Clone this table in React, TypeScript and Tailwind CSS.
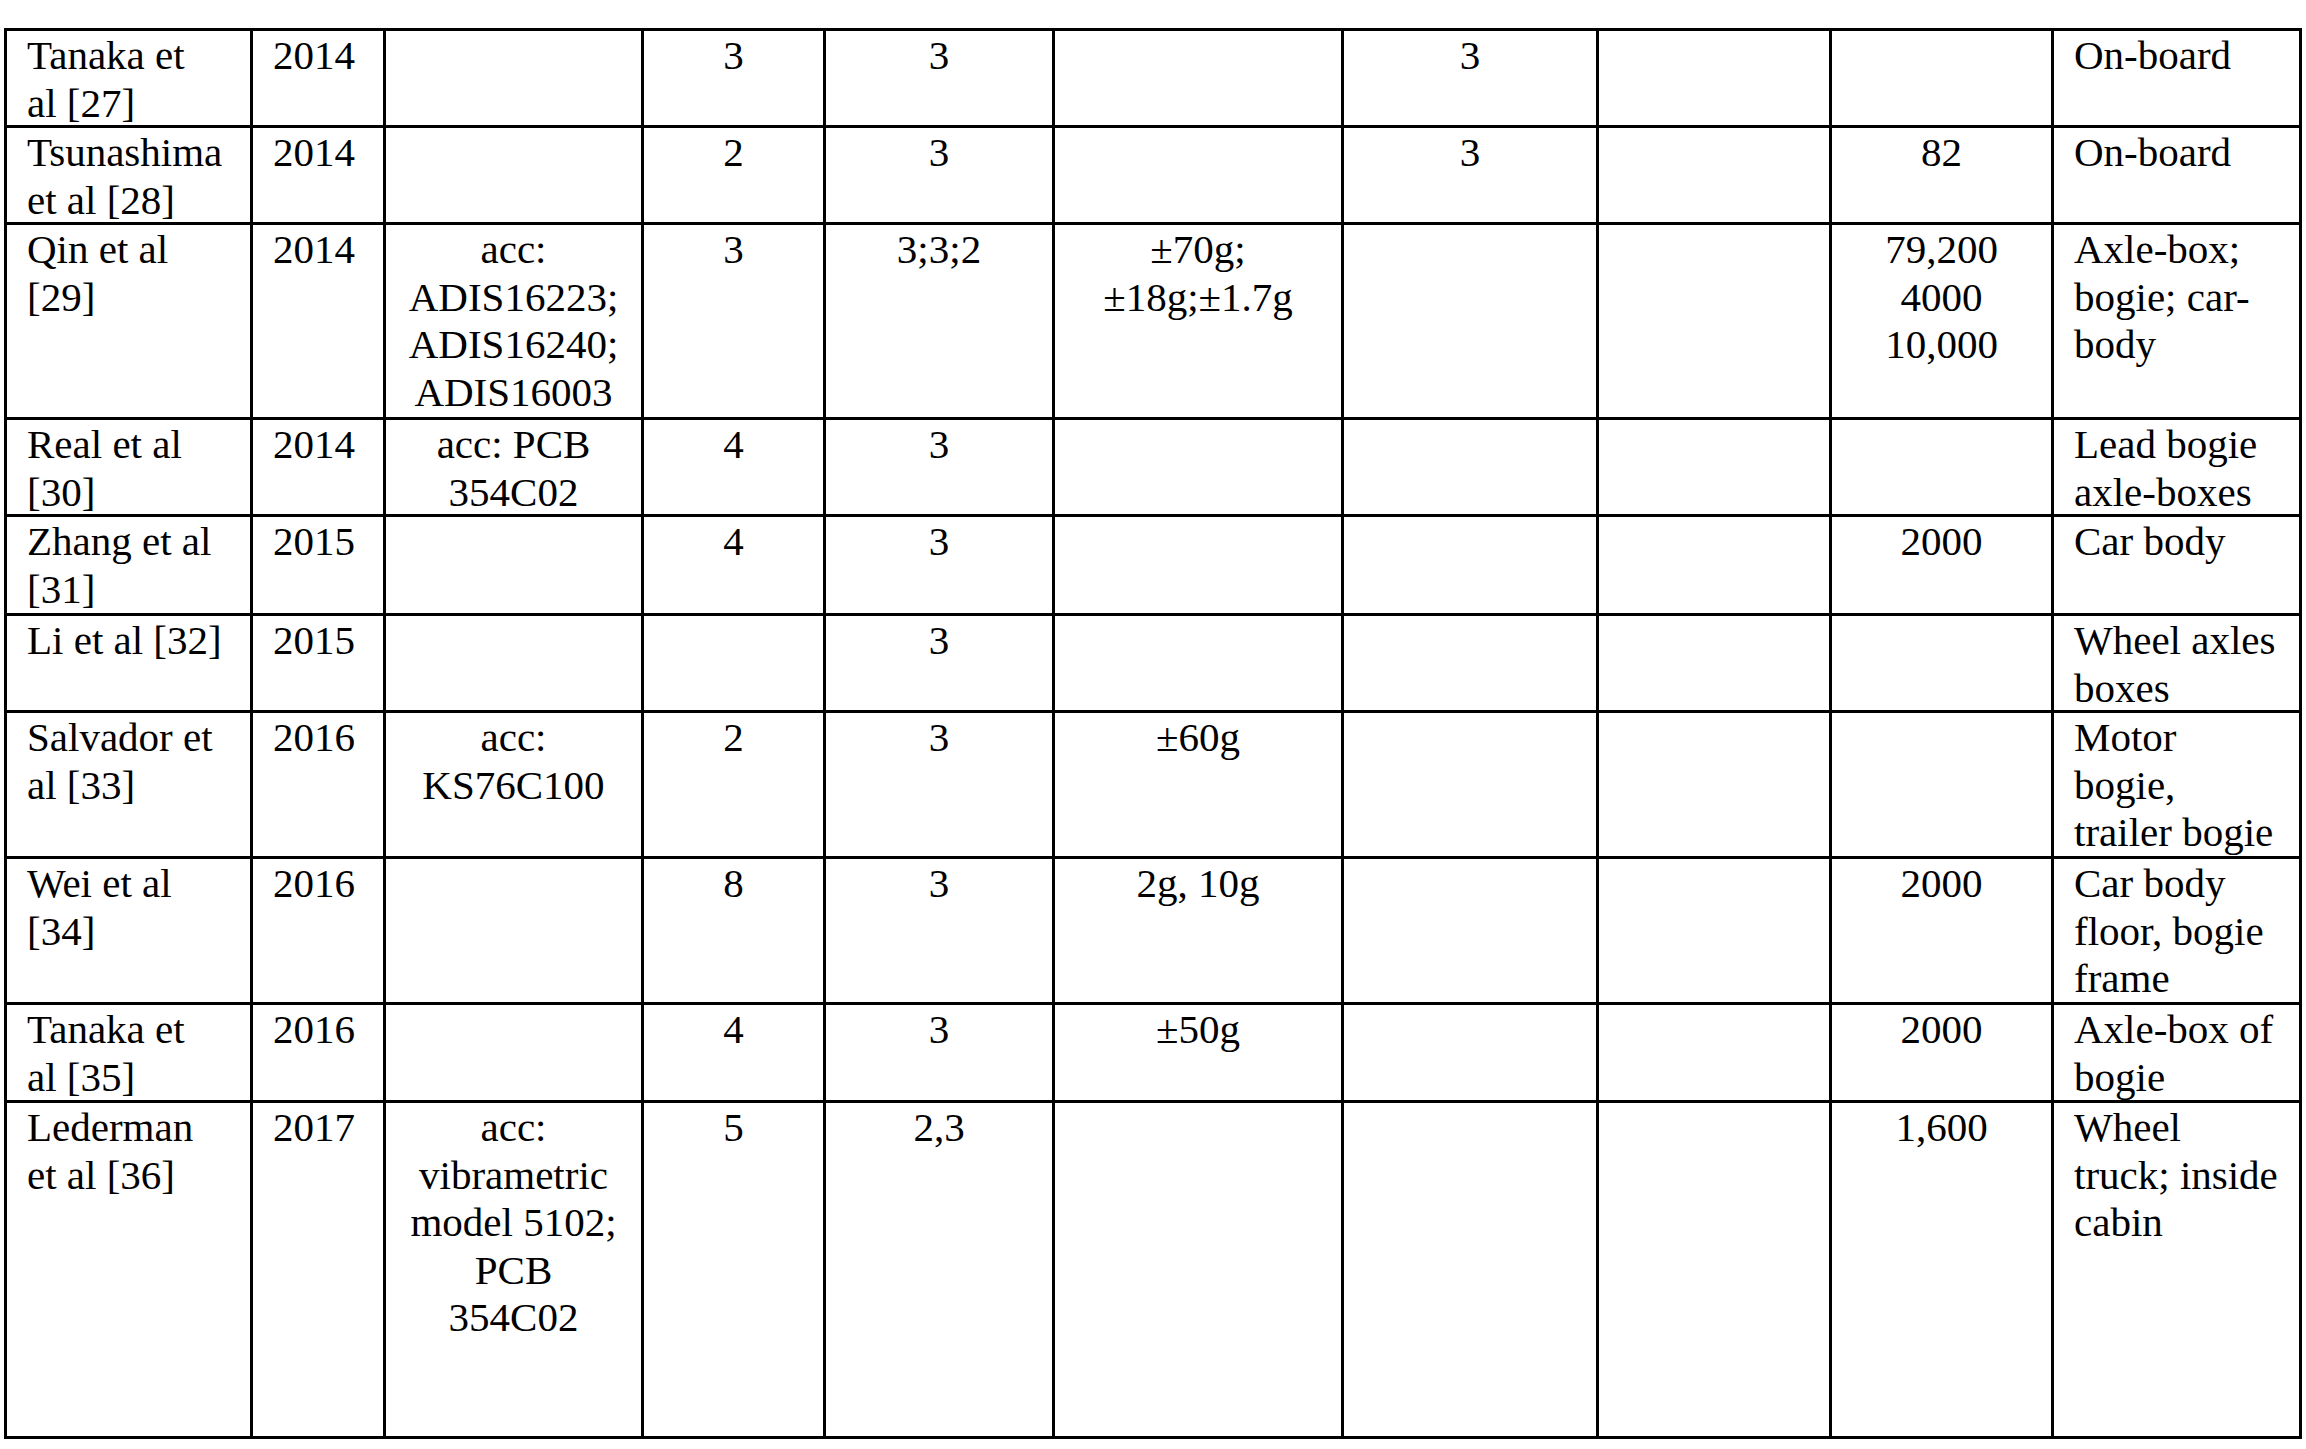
import React from 'react';

// Per-column text alignment (cols 3-9 are centred, the rest left)
const align = [
    'text-left pl-[20px] pr-[12px]',
    'text-left px-[20px]',
    'text-center px-[12px]',
    'text-center px-[12px]',
    'text-center px-[12px]',
    'text-center px-[12px]',
    'text-center px-[12px]',
    'text-center px-[12px]',
    'text-center px-[12px]',
    'text-left px-[20px]',
];

type Row = { h: string; cells: (string[] | null)[] };

const rows: Row[] = [
    {
        h: 'h-[97px]',
        cells: [['Tanaka et', 'al [27]'], ['2014'], null, ['3'], ['3'], null, ['3'], null, null, ['On-board']],
    },
    {
        h: 'h-[97px]',
        cells: [['Tsunashima', 'et al [28]'], ['2014'], null, ['2'], ['3'], null, ['3'], null, ['82'], ['On-board']],
    },
    {
        h: 'h-[195px]',
        cells: [
            ['Qin et al', '[29]'],
            ['2014'],
            ['acc:', 'ADIS16223;', 'ADIS16240;', 'ADIS16003'],
            ['3'],
            ['3;3;2'],
            ['±70g;', '±18g;±1.7g'],
            null,
            null,
            ['79,200', '4000', '10,000'],
            ['Axle-box;', 'bogie; car-', 'body'],
        ],
    },
    {
        h: 'h-[97px]',
        cells: [['Real et al', '[30]'], ['2014'], ['acc: PCB', '354C02'], ['4'], ['3'], null, null, null, null, ['Lead bogie', 'axle-boxes']],
    },
    {
        h: 'h-[99px]',
        cells: [['Zhang et al', '[31]'], ['2015'], null, ['4'], ['3'], null, null, null, ['2000'], ['Car body']],
    },
    {
        h: 'h-[97px]',
        cells: [['Li et al [32]'], ['2015'], null, null, ['3'], null, null, null, null, ['Wheel axles', 'boxes']],
    },
    {
        h: 'h-[146px]',
        cells: [
            ['Salvador et', 'al [33]'],
            ['2016'],
            ['acc:', 'KS76C100'],
            ['2'],
            ['3'],
            ['±60g'],
            null,
            null,
            null,
            ['Motor', 'bogie,', 'trailer bogie'],
        ],
    },
    {
        h: 'h-[146px]',
        cells: [
            ['Wei et al', '[34]'],
            ['2016'],
            null,
            ['8'],
            ['3'],
            ['2g, 10g'],
            null,
            null,
            ['2000'],
            ['Car body', 'floor, bogie', 'frame'],
        ],
    },
    {
        h: 'h-[98px]',
        cells: [['Tanaka et', 'al [35]'], ['2016'], null, ['4'], ['3'], ['±50g'], null, null, ['2000'], ['Axle-box of', 'bogie']],
    },
    {
        h: 'h-[336px]',
        cells: [
            ['Lederman', 'et al [36]'],
            ['2017'],
            ['acc:', 'vibrametric', 'model 5102;', 'PCB', '354C02'],
            ['5'],
            ['2,3'],
            null,
            null,
            null,
            ['1,600'],
            ['Wheel', 'truck; inside', 'cabin'],
        ],
    },
];

export default function App() {
    return (
        <div className="min-h-screen bg-white text-black font-['Liberation_Serif','Times_New_Roman',serif]">
            <div className="pt-[28px] pl-[4px]">
                <div className="grid w-fit grid-cols-[246px_133px_258px_182px_229px_289px_255px_233px_222px_248px] border-l-[3px] border-t-[3px] border-black text-[41px] leading-[47.5px]">
                    {rows.map((row, r) => (
                        <React.Fragment key={r}>
                            {row.cells.map((lines, c) => (
                                <div
                                    key={c}
                                    className={`${row.h} ${align[c]} overflow-hidden border-b-[3px] border-r-[3px] border-black pt-[1px]`}
                                >
                                    {lines?.map((line, i) => (
                                        <div key={i} className="whitespace-nowrap">
                                            {line}
                                        </div>
                                    ))}
                                </div>
                            ))}
                        </React.Fragment>
                    ))}
                </div>
            </div>
        </div>
    );
}
